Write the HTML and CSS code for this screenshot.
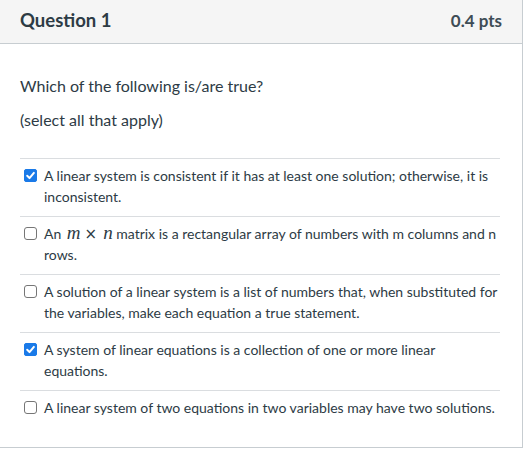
FILE: index.html
```html
<!DOCTYPE html>
<html>
<head>
<meta charset="utf-8">
<link rel="stylesheet" href="styles.css">
</head>
<body>
<div class="quiz">
  <div class="header">
    <span class="title">Question 1</span>
    <span class="pts">0.4 pts</span>
  </div>
  <div class="content">
    <p class="q">Which of the following is/are true?</p>
    <p class="q sub">(select all that apply)</p>
    <div class="answers">
      <div class="ans">
        <span class="box checked"><svg viewBox="0 0 13 13" width="13" height="13"><path d="M3.2 6.8 L5.5 9.1 L9.9 3.9" fill="none" stroke="#fff" stroke-width="2" stroke-linecap="round" stroke-linejoin="round"/></svg></span>
        <span class="txt">A linear system is consistent if it has at least one solution; otherwise, it is inconsistent.</span>
      </div>
      <div class="ans">
        <span class="box"></span>
        <span class="txt">An <span class="math">m</span><span class="times">×</span><span class="math">n</span> matrix is a rectangular array of numbers with m columns and n rows.</span>
      </div>
      <div class="ans">
        <span class="box"></span>
        <span class="txt">A solution of a linear system is a list of numbers that, when substituted for the variables, make each equation a true statement.</span>
      </div>
      <div class="ans">
        <span class="box checked"><svg viewBox="0 0 13 13" width="13" height="13"><path d="M3.2 6.8 L5.5 9.1 L9.9 3.9" fill="none" stroke="#fff" stroke-width="2" stroke-linecap="round" stroke-linejoin="round"/></svg></span>
        <span class="txt">A system of linear equations is a collection of one or more linear equations.</span>
      </div>
      <div class="ans">
        <span class="box"></span>
        <span class="txt">A linear system of two equations in two variables may have two solutions.</span>
      </div>
    </div>
  </div>
</div>
</body>
</html>
```
FILE: styles.css
```css
html, body {
  margin: 0;
  padding: 0;
  background: #fff;
}
body {
  font-family: Lato, "Noto Sans", sans-serif;
  color: #2d3b45;
}
.quiz {
  width: 523px;
  height: 448px;
  border: 1px solid #c7cdd1;
  border-left: none;
  border-top: none;
  box-sizing: border-box;
}
.header {
  height: 44px;
  background: #f5f5f5;
  border-bottom: 1px solid #c7cdd1;
  box-sizing: border-box;
  display: flex;
  justify-content: space-between;
  align-items: center;
  padding: 0 20px 3px 20px;
}
.title {
  font-weight: bold;
  font-size: 18.5px;
}
.pts {
  font-weight: bold;
  font-size: 17px;
  color: #3e4c56;
}
.content {
  padding: 30px 22px 0 20px;
}
.q {
  margin: 0;
  font-size: 16px;
  line-height: 24px;
}
.sub {
  margin-top: 10px;
  margin-bottom: 26px;
}
.answers {
  display: flex;
  flex-direction: column;
}
.ans {
  border-top: 1px solid #dadde0;
  display: flex;
  align-items: flex-start;
  padding: 6px 0 9px 4px;
  height: 58px;
  box-sizing: border-box;
  font-size: 14px;
  line-height: 21px;
}
.ans:last-child {
  height: auto;
}
.box {
  flex: none;
  width: 13px;
  height: 13px;
  box-sizing: border-box;
  border: 1px solid #767676;
  border-radius: 3px;
  margin-top: 4px;
  margin-right: 7px;
  background: #fff;
  display: flex;
}
.box.checked {
  background: #1a7ae8;
  border-color: #1a7ae8;
  border-radius: 2px;
}
.box.checked svg {
  margin: -1px;
}
.math {
  font-family: "Liberation Serif", serif;
  font-style: italic;
  font-size: 19px;
  line-height: 1;
  margin-left: 2px;
}
.times {
  font-family: "DejaVu Sans", sans-serif;
  font-size: 15px;
  line-height: 1;
  margin: 0 4px;
}
```
